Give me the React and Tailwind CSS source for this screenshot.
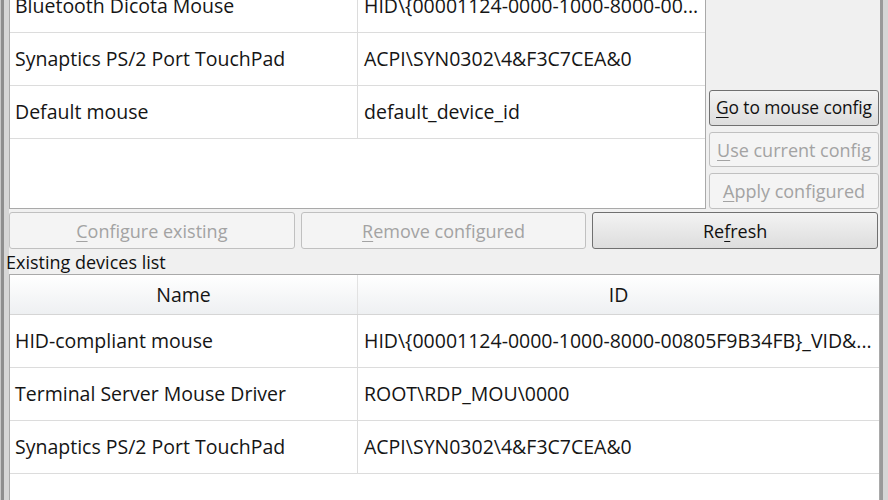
import React from "react";

const configured = [
  { name: "Bluetooth Dicota Mouse", id: "HID\\{00001124-0000-1000-8000-00..." },
  { name: "Synaptics PS/2 Port TouchPad", id: "ACPI\\SYN0302\\4&F3C7CEA&0" },
  { name: "Default mouse", id: "default_device_id" },
];

const existing = [
  { name: "HID-compliant mouse", id: "HID\\{00001124-0000-1000-8000-00805F9B34FB}_VID&..." },
  { name: "Terminal Server Mouse Driver", id: "ROOT\\RDP_MOU\\0000" },
  { name: "Synaptics PS/2 Port TouchPad", id: "ACPI\\SYN0302\\4&F3C7CEA&0" },
];

function Mnemonic({ text, at }) {
  return (
    <span className="whitespace-nowrap">
      {text.slice(0, at)}
      <span className="underline underline-offset-[3px] decoration-1">{text[at]}</span>
      {text.slice(at + 1)}
    </span>
  );
}

function Btn({ text, at, enabled = false, className = "" }) {
  return (
    <div
      className={`flex items-center justify-center rounded-[3px] border ${
        enabled
          ? "border-[#707070] bg-gradient-to-b from-[#f3f3f3] to-[#dddddd] text-[#111]"
          : "border-[#c0c0c0] bg-[#f4f4f4] text-[#a3a3a3]"
      } ${className}`}
    >
      <Mnemonic text={text} at={at} />
    </div>
  );
}

function Row({ name, id }) {
  return (
    <div className="flex h-[53px] border-b border-[#dcdcdc] text-[19.5px]">
      <div className="flex w-[348px] items-center border-r border-[#dcdcdc] pl-[5px] whitespace-nowrap">
        {name}
      </div>
      <div className="flex flex-1 items-center pl-[6px] whitespace-nowrap overflow-hidden">{id}</div>
    </div>
  );
}

export default function App() {
  return (
    <div
      className="flex h-[500px] w-[888px] overflow-hidden bg-[#f0f0f0] text-[18px] leading-none text-[#151515]"
      style={{ fontFamily: '"Open Sans", "Noto Sans", sans-serif' }}
    >
      {/* left window frame */}
      <div className="flex w-[9px] shrink-0">
        <div className="w-[1px] bg-[#c8c8c8]" />
        <div className="w-[3px] bg-[#8e8e8e]" />
        <div className="flex-1 bg-[#d6d6d6]" />
      </div>

      <div className="flex w-[871px] shrink-0 flex-col">
        {/* configured devices */}
        <div className="flex">
          <div className="mt-[-20px] h-[229px] w-[697px] shrink-0 border-b border-l border-r border-[#a9a9a9] bg-white">
            {configured.map((r) => (
              <Row key={r.name} {...r} />
            ))}
          </div>
          <div className="flex flex-1 flex-col justify-end gap-[6px] pl-[3px] pr-[1px]">
            <Btn text="Go to mouse config" at={0} enabled className="h-[36px] text-[17.4px] tracking-[-0.1px]" />
            <Btn text="Use current config" at={0} className="h-[35px]" />
            <Btn text="Apply configured" at={0} className="h-[36px]" />
          </div>
        </div>

        <div className="mt-[3px] flex gap-[6px] pr-[2px]">
          <Btn text="Configure existing" at={0} className="h-[37px] flex-1" />
          <Btn text="Remove configured" at={0} className="h-[37px] flex-1" />
          <Btn text="Refresh" at={2} enabled className="h-[37px] flex-1" />
        </div>

        <div className="ml-[-3px] mt-[4px] h-[21px] text-[#111]">Existing devices list</div>

        {/* existing devices */}
        <div className="flex-1 border-l border-r border-t border-[#a9a9a9] bg-white">
          <div className="flex h-[40px] border-b border-[#d5d5d5] bg-gradient-to-b from-white to-[#eef0f2] text-[19.5px]">
            <div className="flex w-[348px] items-center justify-center border-r border-[#e2e2e2]">Name</div>
            <div className="flex flex-1 items-center justify-center">ID</div>
          </div>
          {existing.map((r) => (
            <Row key={r.name} {...r} />
          ))}
        </div>
      </div>

      {/* right window frame */}
      <div className="flex flex-1">
        <div className="w-[3px] bg-[#9a9a9a]" />
        <div className="flex-1 bg-[#d6d6d6]" />
      </div>
    </div>
  );
}
